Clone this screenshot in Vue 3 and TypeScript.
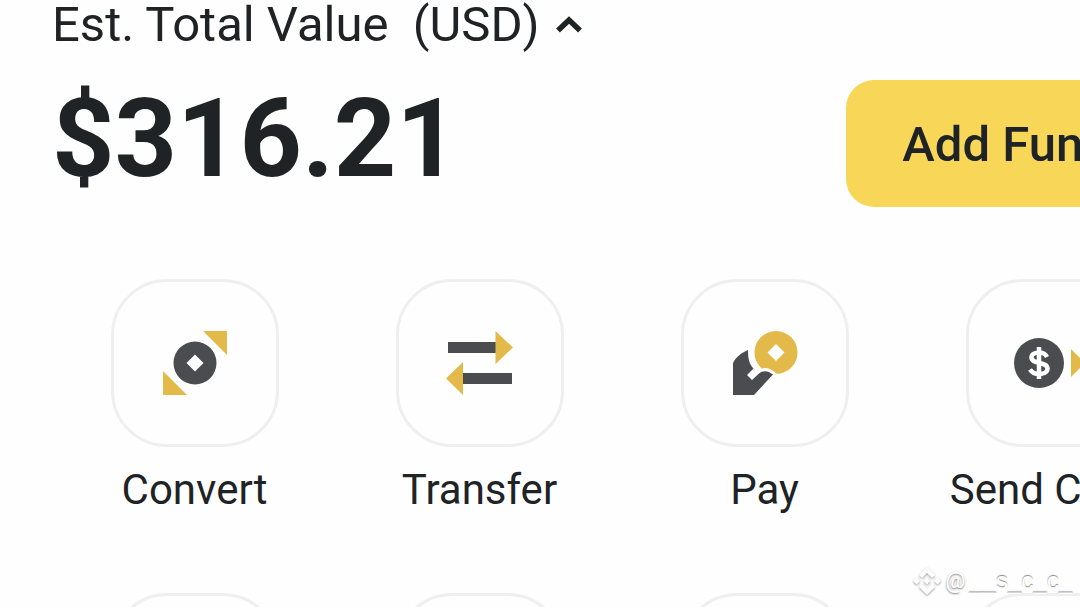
<script setup lang="ts">
type IconName = 'convert' | 'transfer' | 'pay' | 'send'

interface Action {
  icon: IconName
  label: string
}

const actions: Action[] = [
  { icon: 'convert', label: 'Convert' },
  { icon: 'transfer', label: 'Transfer' },
  { icon: 'pay', label: 'Pay' },
  { icon: 'send', label: 'Send Cash' },
]
</script>

<template>
  <main class="wallet">
    <div class="content">
      <header class="summary">
        <div class="balance">
          <button class="currency" type="button">
            <span>Est. Total Value&nbsp; (USD)</span>
            <svg class="chevron" viewBox="0 0 26 18" aria-hidden="true">
              <path d="M2 14.500 13 4l11 10.500" fill="none" stroke="#202325" stroke-width="5.500" />
            </svg>
          </button>
          <p class="amount">$316.21</p>
        </div>
        <button class="add" type="button">Add Funds</button>
      </header>

      <nav class="actions" aria-label="Wallet actions">
        <button v-for="action in actions" :key="action.label" class="action" type="button">
          <span class="tile">
            <svg v-if="action.icon === 'convert'" class="icon" viewBox="0 0 72 72" aria-hidden="true">
              <path class="gold" d="M44 4h24v24zM4 44l24 24H4z" />
              <path class="dark" fill-rule="evenodd" d="M36 14.500a21.500 21.500 0 1 1 0 43 21.500 21.500 0 0 1 0-43zm0 13-8.500 8.500 8.500 8.500 8.500-8.500z" />
            </svg>
            <svg v-else-if="action.icon === 'transfer'" class="icon" viewBox="0 0 72 72" aria-hidden="true">
              <path class="dark" d="M4 15h48v11H4zM19 46h49v11H19z" />
              <path class="gold" d="M51.500 4 69 20.500 51.500 37zM19 35v33L2 51.500z" />
            </svg>
            <svg v-else-if="action.icon === 'pay'" class="icon" viewBox="0 0 72 72" aria-hidden="true">
              <path class="gold" fill-rule="evenodd" d="M47 4a21.500 21.500 0 1 1 0 43 21.500 21.500 0 0 1 0-43zm0 13-8.500 8.500L47 34l8.500-8.500z" />
              <path class="gap" d="M23 53l7-6.500c4-3.500 9-3 14 1L34 58z" />
              <path class="dark" d="M4 36c3-6 8-10 15-13 0 8 1 14 5.500 18.500L18 48l5 5 7-6.500c4-3.500 9-3 14 1L25 68H4z" />
            </svg>
            <svg v-else class="icon" viewBox="0 0 72 72" aria-hidden="true">
              <circle class="dark" cx="25" cy="36" r="25" />
              <path d="M33 30c-1.500-3-4-4.500-8-4.500-4.500 0-7.500 2-7.500 5 0 7 16 4 16 11 0 3.500-3.500 5.500-8.500 5.500-4 0-7-1.500-9-4.500M25 20v32" fill="none" stroke="#fff" stroke-width="4.500" />
              <path class="gold" d="M57 22v28l14-14z" />
            </svg>
          </span>
          <span class="label">{{ action.label }}</span>
        </button>
        <span v-for="slot in 4" :key="slot" class="action" aria-hidden="true">
          <span class="tile"></span>
        </span>
      </nav>
    </div>

    <div class="watermark">
      <svg class="mark" viewBox="0 0 28 28" aria-hidden="true">
        <path d="M14 0l8 8-3 3-5-5-5 5-3-3zM14 28l8-8-3-3-5 5-5-5-3 3zM3.500 10.500l3.500 3.500-3.500 3.500L0 14zM24.500 10.500L28 14l-3.500 3.500L21 14zM14 10.500l3.500 3.500-3.500 3.500-3.500-3.500z" />
      </svg>
      <span class="at">@</span><span class="handle">__s_c_c_</span>
    </div>
  </main>
</template>

<style>
body {
  margin: 0;
  background: #fefefe;
}
</style>

<style scoped>
.wallet {
  position: relative;
  height: 100vh;
  overflow: hidden;
  color: #202325;
  font-family: Roboto, "Liberation Sans", sans-serif;
}

.content {
  box-sizing: border-box;
  width: max-content;
  min-width: 100%;
  padding: 0 52px;
}

button {
  margin: 0;
  padding: 0;
  border: 0;
  background: none;
  color: inherit;
  font: inherit;
  cursor: pointer;
}

.summary {
  display: flex;
  justify-content: space-between;
  align-items: flex-end;
  padding-bottom: 72px;
}

.currency {
  display: flex;
  align-items: center;
  gap: 16px;
  font-size: 49px;
  line-height: 50px;
}

.chevron {
  width: 26px;
  height: 18px;
}

.amount {
  margin: 22px 0 0;
  font-size: 109px;
  font-weight: 700;
  line-height: 135px;
}

.add {
  padding: 2px 56px 0;
  border-radius: 28px;
  background: #f8d758;
  font-size: 49px;
  font-weight: 500;
  line-height: 125px;
}

.actions {
  display: grid;
  grid-template-columns: repeat(4, minmax(285px, 1fr));
  row-gap: 76px;
}

.action {
  display: flex;
  flex-direction: column;
  align-items: center;
  gap: 16px;
}

.tile {
  display: grid;
  place-items: center;
  box-sizing: border-box;
  width: 168px;
  height: 168px;
  border: 3px solid #efefef;
  border-radius: 56px;
}

.icon {
  width: 72px;
  height: 72px;
}

.dark {
  fill: #4b4c50;
}

.gold {
  fill: #e3b94a;
}

.gap {
  fill: #fefefe;
  stroke: #fefefe;
  stroke-width: 6;
}

.label {
  font-size: 42px;
  line-height: 54px;
}

.watermark {
  position: absolute;
  right: 8px;
  bottom: 12px;
  display: flex;
  align-items: center;
  color: #fff;
  font-size: 24px;
  line-height: 28px;
}

.mark {
  width: 28px;
  height: 28px;
  margin-right: 5px;
  fill: #fff;
  filter: drop-shadow(0 1px 1px #999);
}

.at {
  margin-right: 4px;
  font-size: 22px;
  font-weight: 500;
  text-shadow: 0 1px 2px #777;
}

.handle {
  font-family: "Liberation Sans", Arial, sans-serif;
  text-shadow: 0 -1px 1px #888;
}
</style>
